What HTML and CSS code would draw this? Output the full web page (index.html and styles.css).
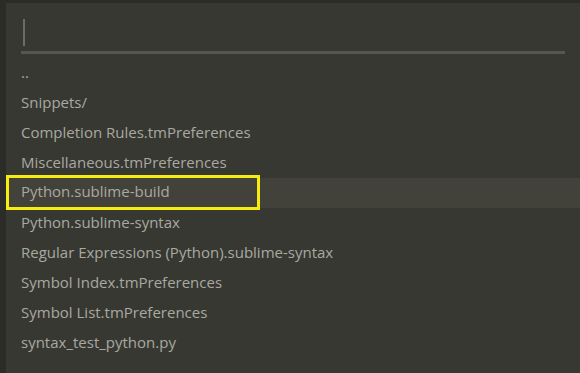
FILE: index.html
```html
<!DOCTYPE html>
<html lang="en">
<head>
    <meta charset="UTF-8">
    <title>Goto Anything</title>
    <link rel="stylesheet" href="styles.css">
</head>
<body>

    <div class="panel">
        <div class="query">
            <span class="caret"></span>
        </div>

        <ul class="results">
            <li class="item">..</li>
            <li class="item">Snippets/</li>
            <li class="item">Completion Rules.tmPreferences</li>
            <li class="item">Miscellaneous.tmPreferences</li>
            <li class="item selected"><span class="mark">Python.sublime-build</span></li>
            <li class="item">Python.sublime-syntax</li>
            <li class="item">Regular Expressions (Python).sublime-syntax</li>
            <li class="item">Symbol Index.tmPreferences</li>
            <li class="item">Symbol List.tmPreferences</li>
            <li class="item">syntax_test_python.py</li>
        </ul>
    </div>

</body>
</html>
```

FILE: styles.css
```css
html, body { margin: 0; height: 100%; }
body { background: #2b2c27; font-family: "Open Sans", "Noto Sans", sans-serif; overflow: hidden; }
.panel { margin: 3px 0 0 6px; background: #373832; height: 100%; padding: 14px 15px 0 0; }
.query { margin-left: 15px; height: 34px; border-bottom: 3px solid #57574f; position: relative; }
.caret { position: absolute; left: 2px; top: 2px; width: 2px; height: 27px; background: #6c6c64; }
.results { list-style: none; margin: 4px -15px 0 0; padding: 0; }
.item { height: 30px; line-height: 28px; font-size: 15px; color: #a9a9a1; padding-left: 15px; white-space: nowrap; }
.item.selected { background: #42423b; padding-left: 0; position: relative; }
/* yellow annotation box round the chosen row */
.mark { display: inline-block; box-sizing: border-box; width: 254px; height: 35px; margin-top: -3px; border: 3px solid #f7ec10; padding-left: 12px; line-height: 27px; vertical-align: top; }
```
